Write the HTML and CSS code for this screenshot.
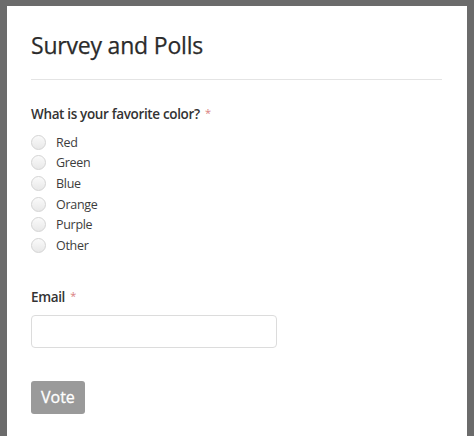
FILE: index.html
```html
<!DOCTYPE html>
<html lang="en">
<head>
  <meta charset="UTF-8" />
  <title>Survey and Polls</title>
  <link rel="stylesheet" href="styles.css">
</head>
<body>

  <div class="panel">
    <h1 class="title">Survey and Polls</h1>

    <form class="poll">
      <!-- favourite colour -->
      <div class="field">
        <div class="label">What is your favorite color? <span class="req">*</span></div>
        <ul class="choices">
          <li><span class="radio"></span>Red</li>
          <li><span class="radio"></span>Green</li>
          <li><span class="radio"></span>Blue</li>
          <li><span class="radio"></span>Orange</li>
          <li><span class="radio"></span>Purple</li>
          <li><span class="radio"></span>Other</li>
        </ul>
      </div>

      <!-- email -->
      <div class="field field-email">
        <div class="label">Email <span class="req">*</span></div>
        <div class="text-input"></div>
      </div>

      <div class="btn">Vote</div>
    </form>
  </div>

</body>
</html>
```

FILE: styles.css
```css
* { margin: 0; padding: 0; box-sizing: border-box; }
body {
  font-family: "Open Sans", "Noto Sans", sans-serif;
  background: #6b6b6b;
  height: 436px;
  overflow: hidden;
  padding: 6px 7px 0 7px;
}
.panel {
  background: #fff;
  height: 100%;
  padding: 0 24px;
  color: #3a3a3a;
}
.title {
  font-size: 23px;
  font-weight: 400;
  letter-spacing: -0.2px;
  line-height: 32px;
  padding-top: 23px;
  padding-bottom: 18px;
  border-bottom: 1px solid #e4e4e4;
  margin-right: 1px;
  color: #2b2b2b;
  -webkit-text-stroke: 0.25px #2b2b2b;
}
.field {
  margin-top: 23px;
}
.label {
  font-size: 13.5px;
  font-weight: 600;
  letter-spacing: -0.35px;
  line-height: 20px;
  color: #333;
}
.req {
  color: #d98080;
  font-size: 11px;
  font-weight: 400;
  vertical-align: 2px;
  margin-left: 2px;
}
.choices {
  list-style: none;
  margin-top: 8px;
}
.choices li {
  display: flex;
  align-items: center;
  height: 20.6px;
  font-size: 12.5px;
  letter-spacing: -0.3px;
  color: #3d3d3d;
}
.radio {
  width: 15px;
  height: 15px;
  border-radius: 50%;
  border: 1px solid #d4d4d4;
  background: linear-gradient(#fafafa, #e8e8e8);
  margin-right: 10px;
}
.field-email {
  margin-top: 30px;
}
.text-input {
  width: 246px;
  height: 33px;
  border: 1px solid #dcdcdc;
  border-radius: 4px;
  margin-top: 8px;
}
.btn {
  display: inline-block;
  margin-top: 33px;
  background: #9a9a9a;
  color: #fff;
  font-size: 16px;
  font-weight: 400;
  -webkit-text-stroke: 0.3px #fff;
  line-height: 33px;
  padding: 0 10px;
  border-radius: 3px;
}
```
